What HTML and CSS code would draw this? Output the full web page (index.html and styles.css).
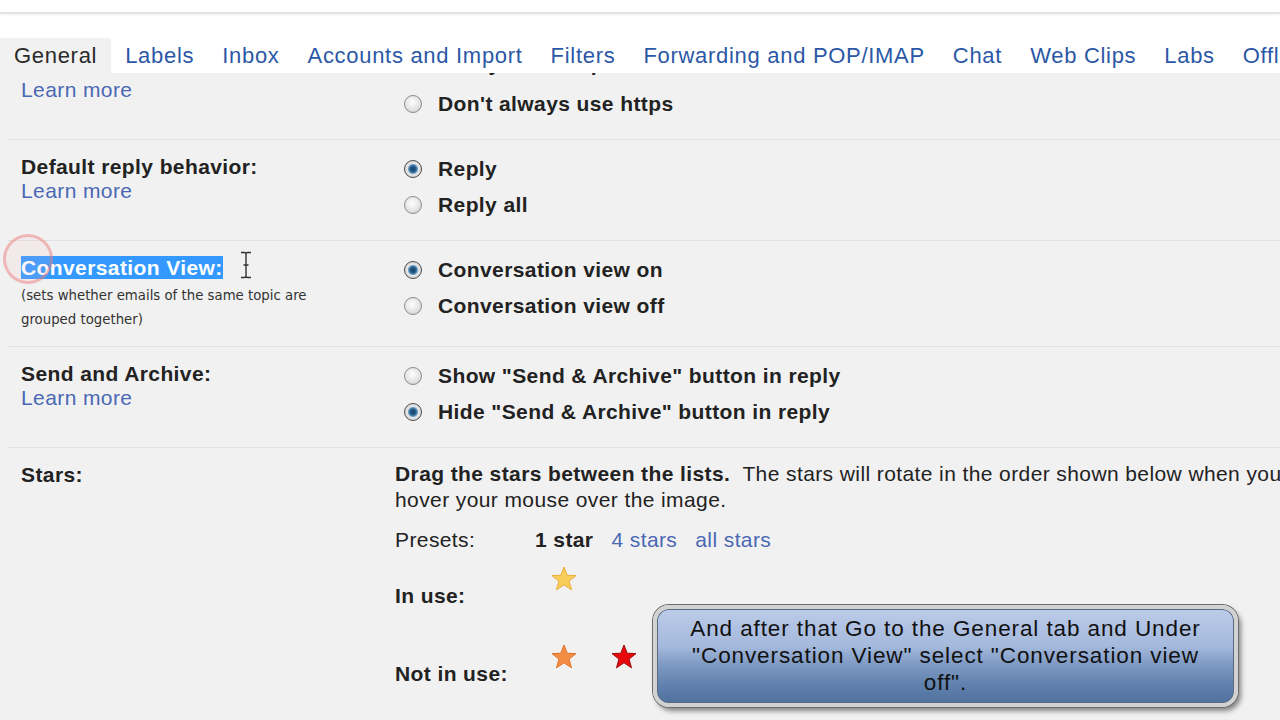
FILE: index.html
```html
<!DOCTYPE html>
<html lang="en">
<head>
  <meta charset="UTF-8">
  <meta name="viewport" content="width=device-width, initial-scale=1.0">
  <title>Settings - General</title>
  <link rel="stylesheet" href="styles.css">
</head>
<body>

  <div class="topbar"></div>

  <nav class="tabs">
    <span class="tab active">General</span>
    <a class="tab" href="#">Labels</a>
    <a class="tab" href="#">Inbox</a>
    <a class="tab" href="#">Accounts and Import</a>
    <a class="tab" href="#">Filters</a>
    <a class="tab" href="#">Forwarding and POP/IMAP</a>
    <a class="tab" href="#">Chat</a>
    <a class="tab" href="#">Web Clips</a>
    <a class="tab" href="#">Labs</a>
    <a class="tab" href="#">Offline</a>
    <a class="tab" href="#">Themes</a>
  </nav>

  <div class="content">
    <div class="row first">
      <div class="label">
        <b>Browser connection:</b>
        <a class="learn" href="#">Learn more</a>
      </div>
      <div class="options">
        <div class="option"><span class="radio"></span>Always use https</div>
        <div class="option"><span class="radio"></span>Don't always use https</div>
      </div>
    </div>

    <div class="row">
      <div class="label">
        <b>Default reply behavior:</b>
        <a class="learn" href="#">Learn more</a>
      </div>
      <div class="options">
        <div class="option"><span class="radio checked"></span>Reply</div>
        <div class="option"><span class="radio"></span>Reply all</div>
      </div>
    </div>

    <div class="row conv">
      <div class="label">
        <b><span class="selected">Conversation View:</span></b>
        <span class="hint">(sets whether emails of the same topic are grouped together)</span>
      </div>
      <div class="options">
        <div class="option"><span class="radio checked"></span>Conversation view on</div>
        <div class="option"><span class="radio"></span>Conversation view off</div>
      </div>
    </div>

    <div class="row">
      <div class="label">
        <b>Send and Archive:</b>
        <a class="learn" href="#">Learn more</a>
      </div>
      <div class="options">
        <div class="option"><span class="radio"></span>Show "Send &amp; Archive" button in reply</div>
        <div class="option"><span class="radio checked"></span>Hide "Send &amp; Archive" button in reply</div>
      </div>
    </div>

    <div class="row stars-row">
      <div class="label">
        <b>Stars:</b>
      </div>
      <div class="stars">
        <p class="stars-info"><b>Drag the stars between the lists.</b>&nbsp; The stars will rotate in the order shown below when you<br>hover your mouse over the image.</p>
        <div class="presets">
          <span class="key">Presets:</span>
          <b class="preset">1 star</b>
          <a class="preset" href="#">4 stars</a>
          <a class="preset" href="#">all stars</a>
        </div>
        <div class="star-line">
          <b class="key">In use:</b>
          <svg class="star" viewBox="0 0 26 26"><polygon points="13,1 16.2,9.2 25,9.6 18.1,15.1 20.5,23.8 13,18.8 5.5,23.8 7.9,15.1 1,9.6 9.8,9.2" fill="#f8cd5a" stroke="#e7ad38" stroke-width="1"/></svg>
        </div>
        <div class="star-line">
          <b class="key">Not in use:</b>
          <svg class="star" viewBox="0 0 26 26"><polygon points="13,1 16.2,9.2 25,9.6 18.1,15.1 20.5,23.8 13,18.8 5.5,23.8 7.9,15.1 1,9.6 9.8,9.2" fill="#f38d43" stroke="#e07328" stroke-width="1"/></svg>
          <svg class="star red" viewBox="0 0 26 26"><polygon points="13,1 16.2,9.2 25,9.6 18.1,15.1 20.5,23.8 13,18.8 5.5,23.8 7.9,15.1 1,9.6 9.8,9.2" fill="#e8090c" stroke="#9c0a0a" stroke-width="1"/></svg>
        </div>
      </div>
    </div>
  </div>

  <!-- overlays from the tutorial video -->
  <div class="click-ring"></div>
  <svg class="ibeam" viewBox="0 0 14 28">
    <path d="M2 1.5 H5.5 Q7 1.5 7 3 V25 Q7 26.5 5.5 26.5 H2 M12 1.5 H8.5 Q7 1.5 7 3 M7 25 Q7 26.5 8.5 26.5 H12 M4.5 14 H9.5" fill="none" stroke="#333" stroke-width="1.4"/>
  </svg>

  <div class="callout">
    And after that Go to the General tab and Under<br>
    "Conversation View" select "Conversation view<br>
    off".
  </div>

</body>
</html>
```

FILE: styles.css
```css
body {
  margin: 0;
  font-family: "Liberation Sans", Arial, sans-serif;
  background: #ffffff;
  color: #222;
  overflow: hidden;
  height: 720px;
  position: relative;
}

a {
  text-decoration: none;
}

.topbar {
  height: 12px;
  border-bottom: 2px solid #e2e2e2;
  box-shadow: 0 1px 2px #f0f0f0;
  margin-bottom: 24px;
}

.tabs {
  display: flex;
  height: 35px;
  white-space: nowrap;
  overflow: hidden;
  position: relative;
  z-index: 2;
  background: #ffffff;
}

.tab {
  font-size: 22px;
  letter-spacing: 0.7px;
  line-height: 36px;
  padding: 0 14px;
  color: #2b58a6;
  flex-shrink: 0;
}

.tab.active {
  color: #2a2a2a;
  background: #f1f1f1;
}

.content {
  background: #f1f1f1;
  height: 647px;
  overflow: hidden;
}

.row {
  display: grid;
  grid-template-columns: 387px 1fr;
  margin-left: 8px;
  padding: 15px 0 17px;
  border-bottom: 1px solid #e1e1e1;
}

.row.first {
  margin-top: -42px;
}

.row.first .label {
  padding-top: 8px;
}

.row.first .option:first-child {
  height: 44px;
}

.row.conv {
  padding-bottom: 14px;
}

.label {
  padding-left: 13px;
  font-size: 21px;
  letter-spacing: 0.4px;
  line-height: 24px;
}

.label b {
  display: block;
  color: #222;
}

.learn {
  display: block;
  color: #4a68b4;
}

.selected {
  background: #3399ff;
  color: #ffffff;
}

.hint {
  display: block;
  width: 320px;
  padding-top: 4px;
  font-family: "DejaVu Sans", Verdana, sans-serif;
  font-size: 13.3px;
  letter-spacing: 0;
  line-height: 24px;
  color: #333;
}

.options {
  margin-top: -4px;
  padding-left: 9px;
}

.option {
  display: flex;
  align-items: center;
  gap: 16px;
  height: 36px;
  font-size: 21px;
  letter-spacing: 0.4px;
  font-weight: bold;
  color: #222;
}

.radio {
  width: 16px;
  height: 16px;
  border-radius: 50%;
  border: 1px solid #8c8c8c;
  background: radial-gradient(circle at 45% 40%, #ffffff 0, #e4e4e4 55%, #c4c4c4 100%);
  flex-shrink: 0;
}

.radio.checked {
  border-color: #4a4a4a;
  background: radial-gradient(circle, #163f66 0, #27608f 3px, #6c9cc4 4.5px, #e6e6e6 5.5px, #cfcfcf 100%);
}

.stars-row {
  border-bottom: none;
}

.stars {
  font-size: 21px;
  letter-spacing: 0.4px;
  color: #222;
}

.stars-info {
  margin: -2px 0 0;
  line-height: 26px;
  white-space: nowrap;
}

.presets {
  display: flex;
  align-items: center;
  margin-top: 15px;
  line-height: 24px;
}

.key {
  width: 140px;
  flex-shrink: 0;
}

.preset {
  margin-right: 18px;
}

a.preset {
  color: #4a68b4;
}

.star-line {
  display: flex;
  align-items: flex-start;
  height: 78px;
}

.presets + .star-line {
  margin-top: 14px;
}

.star-line .key {
  padding-top: 18px;
  line-height: 24px;
}

.star {
  width: 26px;
  height: 26px;
  margin-left: 16px;
}

.star.red {
  margin-left: 34px;
}

.click-ring {
  position: absolute;
  left: 3px;
  top: 234px;
  width: 44px;
  height: 44px;
  border-radius: 50%;
  border: 3px solid rgba(232, 120, 120, 0.45);
  background: rgba(255, 190, 190, 0.12);
}

.ibeam {
  position: absolute;
  left: 239px;
  top: 251px;
  width: 14px;
  height: 28px;
}

.callout {
  position: absolute;
  left: 653px;
  top: 605px;
  width: 585px;
  height: 102px;
  box-sizing: border-box;
  border: 4px solid #d2d2d2;
  border-radius: 16px;
  box-shadow: 0 0 0 1px #6e6e6e, inset 0 0 0 1px #5a6a80, 3px 4px 5px rgba(0, 0, 0, 0.45);
  background: linear-gradient(#bccbe9 0%, #a4b9dc 40%, #809bc4 58%, #6182ae 80%, #50719e 100%);
  color: #111;
  font-size: 22.5px;
  letter-spacing: 0.9px;
  line-height: 27px;
  text-align: center;
  padding-top: 6px;
}
```
